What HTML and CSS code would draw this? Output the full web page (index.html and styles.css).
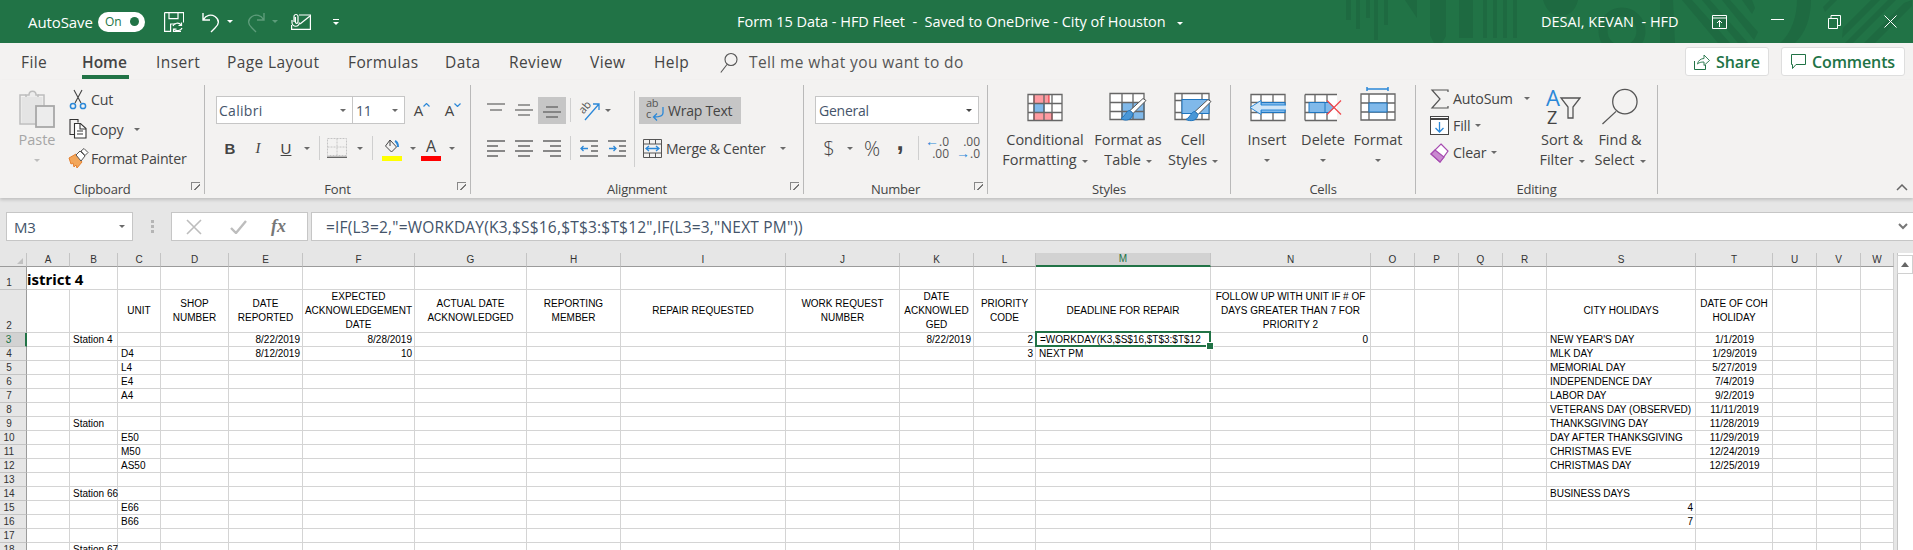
FILE: index.html
```html
<!DOCTYPE html>
<html lang="en">
<head>
<meta charset="utf-8">
<title>Form 15 Data - HFD Fleet</title>
<link rel="stylesheet" href="styles.css">
</head>
<body>
<header class="titlebar">
  <svg class="pattern" width="643" height="43" viewBox="0 0 643 43" fill="#1e6a41">
    <rect x="76" width="5" height="20"/><rect x="86" width="4" height="29"/><rect x="96" width="4" height="18"/><rect x="104" width="4" height="40"/><rect x="114" width="4" height="25"/>
    <path d="M135 0h12v18z"/><path d="M160 0h16v36l-4 7h-8l-4-8z"/><rect x="189" width="14" height="38"/><rect x="213" width="4" height="38"/><rect x="223" width="4" height="38"/><rect x="233" width="4" height="38"/><rect x="243" width="4" height="38"/>
    <path d="M273 0h35c-3 12-10 16-18 16-8 0-14-6-17-16z"/>
    <circle cx="352" cy="31" r="19" fill="none" stroke="#1e6a41" stroke-width="9"/>
    <path d="M390 0h13l2 43h-15zM412 0h10l38 43h-12zM432 0h8l38 43h-10zM452 0h8l28 32-4 8zM472 0h10l3 8-3 6z"/>
    <path d="M510 43c12-10 17-28 17-43h14c0 18-6 34-16 43z"/>
    <path d="M553 7l7-7h7l-12 12zM573 28l28-28h9l-38 38zM575 43l43-43h8l-43 43zM594 43l40-40 8-3v6l-37 37z"/>
  </svg>
  <div class="tb-left">
    <span class="tb-autosave">AutoSave</span>
    <span class="toggle"><span class="toggle-on">On</span><span class="toggle-dot"></span></span>
    <svg class="tb-save" width="20" height="20" viewBox="0 0 20 20" fill="none" stroke="#fff" stroke-width="1.2"><path d="M.6.6h19v10M.6.6v18.8h6V12h5M5 .6v6h9V.6M9 19.4h8"/><path d="M9 14c1-3 6-4 8-1M18 16c-1 3-6 3.500-8 1"/><path d="M17.500 10.500v3h-3M9.500 20v-3h3"/></svg>
    <svg class="tb-undo" width="18" height="22" viewBox="0 0 18 22" fill="none" stroke="#fff" stroke-width="1.4"><path d="M1 2v7h7M1.500 8.500C4 4 9 3 13 5.500c5 3.500 4 8 0 11.500l-4 4"/></svg>
    <span class="caret caret-w tb-c1"></span>
    <svg class="tb-redo" width="18" height="22" viewBox="0 0 18 22" fill="none" stroke="#5d9c7a" stroke-width="1.4"><path d="M17 2v7h-7M16.500 8.500C14 4 9 3 5 5.500c-5 3.500-4 8 0 11.500l4 4"/></svg>
    <span class="caret caret-dim tb-c2"></span>
    <svg class="tb-mail" width="20" height="17" viewBox="0 0 20 17" fill="none" stroke="#fff" stroke-width="1.2"><path d="M8 2h11.400v14.400H.6V12"/><path d="M9 11l10-8"/><path d="M3 9V3.500a2 2 0 0 1 4 0V9a1.300 1.300 0 0 1-2.600 0V4M1 7V9.500a3.500 3.500 0 0 0 7.500 0"/></svg>
    <span class="tb-custom"><span class="tb-line"></span><span class="caret caret-w"></span></span>
  </div>
  <div class="tb-title">Form 15 Data - HFD Fleet&nbsp; -&nbsp; Saved to OneDrive - City of Houston<span class="caret caret-w tb-title-c"></span></div>
  <div class="tb-user">DESAI, KEVAN&nbsp; - HFD</div>
  <svg class="tb-display" width="15" height="14" viewBox="0 0 15 14" fill="none" stroke="#fff"><path d="M.5 .5h14v13H.5zM.5 3h14M7.500 12V5.500M5 8l2.500-2.500L10 8"/></svg>
  <span class="tb-min"></span>
  <svg class="tb-restore" width="13" height="14" viewBox="0 0 13 14" fill="none" stroke="#fff"><path d="M.5 3.500h9v10h-9zM3 3.500V.5h9.500v10h-3"/></svg>
  <svg class="tb-close" width="13" height="13" viewBox="0 0 13 13" fill="none" stroke="#fff"><path d="M.5 .5l12 12M12.500 .5l-12 12"/></svg>
</header>

<nav class="tabs">
  <span class="tab t-file">File</span>
  <span class="tab t-home">Home</span>
  <span class="tab t-insert">Insert</span>
  <span class="tab t-page">Page Layout</span>
  <span class="tab t-formulas">Formulas</span>
  <span class="tab t-data">Data</span>
  <span class="tab t-review">Review</span>
  <span class="tab t-view">View</span>
  <span class="tab t-help">Help</span>
  <svg class="t-search" width="18" height="22" viewBox="0 0 18 22" fill="none" stroke="#555" stroke-width="1.1"><circle cx="11" cy="7.500" r="6"/><path d="M7 12.500L.8 20.500"/></svg>
  <span class="tab t-tell">Tell me what you want to do</span>
  <span class="share"><svg width="16" height="17" viewBox="0 0 16 17" fill="none" stroke="#217346"><path d="M.5 8v8.500h11V12"/><path d="M3.500 11C4 7.500 7 5.500 10 5.500V2l5.500 5.500L10 12.500V9c-3 0-5 .5-6.500 2z" stroke-width=".9"/></svg>Share</span>
  <span class="share comments"><svg width="15" height="15" viewBox="0 0 15 15" fill="none" stroke="#217346"><path d="M.5 .5h14v10H5l-3.500 4v-4h-1z"/></svg>Comments</span>
</nav>

<section class="ribbon">
  <div class="group g-clip">
    <div class="g-body">
      <div class="big paste">
        <svg width="36" height="38" viewBox="0 0 36 38" fill="none" stroke="#bdbdbd" stroke-width="1.500"><path d="M7 5H1v29h16" /><path d="M25 16V5h-6"/><path d="M7 8V5h3c0-5 7-5 7 0h2v3z" fill="#ececec"/><rect x="2.500" y="7" width="21" height="26" fill="#e4e4e4" stroke="none"/><rect x="17" y="16" width="18" height="21" fill="#ececec" stroke="#a8a8a8" stroke-width="1.800"/></svg>
        <span class="big-l dim">Paste</span>
        <span class="caret big-c caret-l"></span>
      </div>
      <div class="clip-col">
        <div class="clip-row"><svg class="ico25" width="18" height="21" viewBox="0 0 18 21" fill="none"><path d="M5 1l7 13M13 1L6 14" stroke="#444" stroke-width="1.100"/><circle cx="4" cy="17" r="2.600" stroke="#2b88d8" stroke-width="1.500"/><circle cx="14" cy="17" r="2.600" stroke="#2b88d8" stroke-width="1.500"/></svg><span>Cut</span></div>
        <div class="clip-row"><svg class="ico25" width="18" height="20" viewBox="0 0 18 20" fill="none" stroke="#333" stroke-width="1.100"><path d="M9 3.500V.5H1v15h4"/><path d="M5.500 4.500h6l5.500 5v9.500H5.500z" fill="#fff"/><path d="M11 5v5h6M8 12h6M8 15h6" /></svg><span>Copy</span><span class="caret copy-c"></span></div>
        <div class="clip-row"><svg class="ico25" width="21" height="21" viewBox="0 0 21 21" fill="none"><path d="M1 10l7-4 6 8-5 6-1-3-2 2-1-4-2 1z" fill="#f2a65a" stroke="#e6812f"/><path d="M8 7l4-4 5 5-4 5z" fill="#fff" stroke="#555"/><path d="M13 3l3-2.500 4 4-3 3z" fill="#fff" stroke="#555"/></svg><span>Format Painter</span></div>
      </div>
    </div>
    <div class="g-label">Clipboard<span class="launcher"></span></div>
  </div>

  <div class="group g-font">
    <div class="g-body rows">
      <div class="row">
        <span class="combo c-font">Calibri<span class="caret"></span></span>
        <span class="combo c-size">11<span class="caret"></span></span>
        <span class="grow-a">A<svg width="7" height="4" viewBox="0 0 7 4" fill="none" stroke="#2b88d8" stroke-width="1.200"><path d="M.5 3.500l3-3 3 3"/></svg></span>
        <span class="grow-a shrink">A<svg width="7" height="4" viewBox="0 0 7 4" fill="none" stroke="#2b88d8" stroke-width="1.200"><path d="M.5 .5l3 3 3-3"/></svg></span>
      </div>
      <div class="row">
        <span class="btn w28 f-b">B</span><span class="btn w28 f-i">I</span><span class="btn w28 f-u">U</span>
        <span class="btn w14"><span class="caret"></span></span>
        <span class="vsep"></span>
        <svg class="f-border" width="20" height="20" viewBox="0 0 20 20" fill="none" stroke="#c4c4c4"><path d="M.5 .5h19v17H.5zM10 .5v17M.5 9h19" stroke-dasharray="2 1"/><path d="M0 19.300h20" stroke="#666" stroke-width="1.400"/></svg>
        <span class="btn w14 f-c2"><span class="caret"></span></span>
        <span class="vsep"></span>
        <span class="swatch-btn"><svg width="16" height="16" viewBox="0 0 16 16" fill="none" stroke="#444"><path d="M6 1l6.500 7-5 5L1.500 7z"/><path d="M6 1v6" /><path d="M11 2c2 1 3 3 3 6" stroke="#2b88d8" stroke-width="2"/></svg><span class="bar yellow"></span></span>
        <span class="btn w14 f-c3"><span class="caret"></span></span>
        <span class="swatch-btn f-color"><span class="color-a">A</span><span class="bar red"></span></span>
        <span class="btn w14 f-c4"><span class="caret"></span></span>
      </div>
    </div>
    <div class="g-label">Font<span class="launcher"></span></div>
  </div>

  <div class="group g-align">
    <div class="g-body a-body">
      <div class="a-col rows">
        <div class="row">
          <span class="btn w28"><svg class="lines" width="18" height="14" viewBox="0 0 18 14"><path d="M0 1h18M3 7h12"/></svg></span>
          <span class="btn w28"><svg class="lines" width="18" height="14" viewBox="0 0 18 14"><path d="M3 2h12M0 7h18M3 12h12"/></svg></span>
          <span class="btn w28 active"><svg class="lines" width="18" height="16" viewBox="0 0 18 16"><path d="M3 5h12M0 10h18M3 15h12"/></svg></span>
          <span class="vsep a-sep"></span>
          <svg class="a-orient" width="24" height="24" viewBox="0 0 24 24" fill="none"><text x="2" y="15" class="mini" transform="rotate(-50 5 13)">ab</text><path d="M6 22L20 6M14 6h6v6" stroke="#2b88d8" stroke-width="1.300"/></svg>
          <span class="caret a-orient-c"></span>
        </div>
        <div class="row">
          <span class="btn w28"><svg class="lines thick" width="18" height="18" viewBox="0 0 18 18"><path d="M0 2h18M0 7h11M0 12h18M0 17h11"/></svg></span>
          <span class="btn w28"><svg class="lines thick" width="18" height="18" viewBox="0 0 18 18"><path d="M0 2h18M3 7h12M0 12h18M3 17h12"/></svg></span>
          <span class="btn w28"><svg class="lines thick" width="18" height="18" viewBox="0 0 18 18"><path d="M0 2h18M7 7h11M0 12h18M7 17h11"/></svg></span>
          <span class="vsep a-sep"></span>
          <span class="btn w28 a-ind"><svg width="18" height="18" viewBox="0 0 18 18" fill="none"><path class="ind-line" d="M0 2h18M11 7h7M11 12h7M0 17h18"/><path d="M8 9.500H1M3.500 7L1 9.500 3.500 12" stroke="#2b88d8" stroke-width="1.300"/></svg></span>
          <span class="btn w28"><svg width="18" height="18" viewBox="0 0 18 18" fill="none"><path class="ind-line" d="M0 2h18M11 7h7M11 12h7M0 17h18"/><path d="M1 9.500h7M5.500 7L8 9.500 5.500 12" stroke="#2b88d8" stroke-width="1.300"/></svg></span>
        </div>
      </div>
      <span class="tall-sep"></span>
      <div class="a-col rows a-col2">
        <div class="row"><span class="wrap active"><svg width="20" height="24" viewBox="0 0 20 24" fill="none"><text x="0" y="9" class="mini">ab</text><text x="0" y="20" class="mini">c</text><path d="M17 9v6c0 3-3 4-9 4M11 15.500L7.500 19l3.500 3.500" stroke="#2b88d8" stroke-width="1.300"/></svg>Wrap Text</span></div>
        <div class="row"><span class="merge"><svg width="19" height="19" viewBox="0 0 19 19" fill="none" stroke="#555"><path d="M.5 .5h18v18H.5zM.5 5h18M.5 14h18M6.500 .5V5M12.500 .5V5M6.500 14v4.500M12.500 14v4.500"/><path d="M3 9.500h13M6 7L3 9.500 6 12M13 7l3 2.500-3 2.500" stroke="#2b88d8" stroke-width="1.300"/></svg>Merge &amp; Center<span class="caret m-c"></span></span></div>
      </div>
    </div>
    <div class="g-label">Alignment<span class="launcher"></span></div>
  </div>

  <div class="group g-num">
    <div class="g-body rows">
      <div class="row"><span class="combo c-gen">General<span class="caret dark"></span></span></div>
      <div class="row">
        <span class="btn w28 n-sym">$</span><span class="btn w14"><span class="caret"></span></span>
        <span class="btn n-pct n-sym">%</span><span class="btn n-cm n-sym">,</span>
        <span class="vsep n-sep"></span>
        <span class="dec"><span><i class="arrow">←</i>.0</span><span>.00</span></span>
        <span class="dec d2"><span>.00</span><span><i class="arrow">→</i>.0</span></span>
      </div>
    </div>
    <div class="g-label">Number<span class="launcher"></span></div>
  </div>

  <div class="group g-styles">
    <div class="g-body bigs">
      <div class="big w86">
        <svg width="36" height="28" viewBox="0 0 36 28"><path class="gfill" d="M1 1h34v26H1z"/><rect x="7" y="1" width="15" height="9" fill="#ff9ba1" stroke="#e2232b"/><rect x="7" y="19" width="18" height="8" fill="#ff9ba1" stroke="#e2232b"/><rect x="7" y="10" width="10" height="9" fill="#80b9ea" stroke="#1f76c0"/><path class="gline" d="M1 1h34v26H1zM1 10h34M1 19h34M7 1v26M17 1v26M25 1v26"/></svg>
        <span class="big-l">Conditional</span><span class="big-l">Formatting<span class="caret lab-c"></span></span>
      </div>
      <div class="big w80">
        <svg width="38" height="30" viewBox="0 0 38 30"><path class="gfill" d="M1 1h34v26H1z"/><rect x="13" y="10" width="22" height="17" fill="#80b9ea" stroke="#1f76c0"/><path class="gline" d="M1 1h34v26H1zM1 10h34M1 19h34M13 1v26M24 1v26"/><path d="M37 8L24 21l-3-3L34 6z" fill="#fff" stroke="#555"/><path d="M21 18c-4 0-4 5-9 8 4 3 11 2 12-5z" fill="#4a97d6" stroke="#1f76c0"/></svg>
        <span class="big-l">Format as</span><span class="big-l">Table<span class="caret lab-c"></span></span>
      </div>
      <div class="big w50">
        <svg width="38" height="30" viewBox="0 0 38 30"><path class="gfill" d="M1 1h34v26H1z"/><path class="gline" d="M1 1h34v26H1zM1 8h34M1 20h34M8 1v26M28 1v26"/><rect x="8" y="7" width="27" height="14" fill="#80b9ea" stroke="#1f76c0"/><path d="M37 9L24 22l-3-3L34 7z" fill="#fff" stroke="#555"/><path d="M21 19c-4 0-4 5-9 8 4 2 11 2 12-5z" fill="#4a97d6" stroke="#1f76c0"/></svg>
        <span class="big-l">Cell</span><span class="big-l">Styles<span class="caret lab-c"></span></span>
      </div>
    </div>
    <div class="g-label">Styles</div>
  </div>

  <div class="group g-cells">
    <div class="g-body bigs">
      <div class="big w56">
        <svg width="38" height="28" viewBox="0 0 38 28"><path class="gfill" d="M3 1h34v26H3z"/><path class="gline" d="M3 1h34v26H3zM3 9h34M3 19h34M13 1v26M25 1v26"/><rect x="13" y="9" width="24" height="10" fill="#80b9ea" stroke="#1f76c0"/><path d="M38 11.500H13V7L2 14l11 7v-4.500h25" fill="#cfe5f7" stroke="#2b88d8"/></svg>
        <span class="big-l">Insert</span><span class="caret big-c"></span>
      </div>
      <div class="big w56">
        <svg width="38" height="28" viewBox="0 0 38 28"><path class="gfill" d="M1 1h32v26H1z"/><path class="gline dash" d="M1 1h32M1 27h32M1 1v26M11 1v26M23 1v26M1 9h20M1 19h20"/><path d="M5 9h20l5 5-5 5H5z" fill="#80b9ea" stroke="#1f76c0"/><path d="M21 9v10" stroke="#1f76c0"/><path d="M23 7l14 14M37 7L23 21" stroke="#f04a4f" stroke-width="1.300"/></svg>
        <span class="big-l">Delete</span><span class="caret big-c"></span>
      </div>
      <div class="big w54 fmt">
        <svg width="36" height="36" viewBox="0 0 36 36"><path d="M7 2v4M28 2v4M7 4h21" stroke="#2b88d8" fill="none" stroke-width="1.500"/><path class="gfill" d="M1 9h34v26H1z"/><path class="gline" d="M1 9h34v26H1zM1 18h34M1 27h34M9 9v26M27 9v26"/><rect x="9" y="18" width="18" height="9" fill="#80b9ea" stroke="#1f76c0"/></svg>
        <span class="big-l">Format</span><span class="caret big-c"></span>
      </div>
    </div>
    <div class="g-label">Cells</div>
  </div>

  <div class="group g-edit">
    <div class="g-body edit-body">
      <div class="edit-col">
        <div class="edit-row"><svg class="ico23" width="19" height="20" viewBox="0 0 19 20" fill="none" stroke="#555" stroke-width="1.200"><path d="M18 3V1H2l8 9-8 9h16v-2"/></svg>AutoSum<span class="caret as-c"></span></div>
        <div class="edit-row"><svg class="ico23" width="19" height="19" viewBox="0 0 19 19" fill="none"><rect x=".5" y=".5" width="18" height="18" fill="#fff" stroke="#444"/><path d="M0 3h19" stroke="#444" stroke-width="2"/><path d="M9.500 6v10M5.500 12l4 4 4-4" stroke="#2b88d8" stroke-width="1.300"/></svg>Fill<span class="caret lab-c"></span></div>
        <div class="edit-row"><svg class="ico23" width="19" height="20" viewBox="0 0 19 20" fill="none" stroke="#a64bb0" stroke-width="1.200"><path d="M11 1l7 7-8 11-9-8z" fill="#fff"/><path d="M5 7l9 7-4 5-9-8z" fill="#c98ad0"/></svg>Clear<span class="caret lab-c"></span></div>
      </div>
      <div class="big w50">
        <span class="sort"><svg width="38" height="36" viewBox="0 0 38 36" fill="none"><text x="3" y="17" class="sort-a">A</text><text x="4" y="35" class="sort-z">Z</text><path d="M18 9h19l-7 9v11h-5V18z" stroke="#555" stroke-width="1.300"/></svg></span>
        <span class="big-l">Sort &amp;</span><span class="big-l">Filter<span class="caret lab-c"></span></span>
      </div>
      <div class="big w66">
        <svg class="find" width="38" height="38" viewBox="0 0 38 38" fill="none" stroke="#555" stroke-width="1.300"><circle cx="24" cy="14" r="12.500"/><path d="M15 24L1 37"/></svg>
        <span class="big-l">Find &amp;</span><span class="big-l">Select<span class="caret lab-c"></span></span>
      </div>
    </div>
    <div class="g-label">Editing</div>
  </div>
  <svg class="collapse" width="12" height="7" viewBox="0 0 12 7" fill="none" stroke="#666" stroke-width="1.500"><path d="M1 6l5-5 5 5"/></svg>
</section>

<section class="fbar">
  <span class="namebox">M3<span class="caret"></span></span>
  <span class="grip"><i></i><i></i><i></i></span>
  <span class="fx-box">
    <svg width="16" height="16" viewBox="0 0 16 16" fill="none" stroke="#bdbdbd" stroke-width="1.600"><path d="M1 1l14 14M15 1L1 15"/></svg>
    <svg width="17" height="14" viewBox="0 0 17 14" fill="none" stroke="#bdbdbd" stroke-width="2.400"><path d="M1 8l5 5L16 1"/></svg>
    <span class="fx">fx</span>
  </span>
  <span class="formula">=IF(L3=2,"=WORKDAY(K3,$S$16,$T$3:$T$12",IF(L3=3,"NEXT PM"))
    <svg class="f-exp" width="10" height="7" viewBox="0 0 10 7" fill="none" stroke="#777" stroke-width="2"><path d="M1 1l4 4 4-4"/></svg>
  </span>
</section>

<main class="sheet">
  <table class="grid">
    <colgroup>
      <col class="c27"><col class="c43"><col class="c48"><col class="c43"><col class="c68"><col class="c74"><col class="c112"><col class="c112"><col class="c94"><col class="c165"><col class="c114"><col class="c74"><col class="c62"><col class="c175"><col class="c160"><col class="c44"><col class="c44"><col class="c44"><col class="c44"><col class="c149"><col class="c77"><col class="c44"><col class="c44"><col class="c33">
    </colgroup>
    <thead>
      <tr>
        <th class="corner"><span class="tri"></span></th>
        <th>A</th><th>B</th><th>C</th><th>D</th><th>E</th><th>F</th><th>G</th><th>H</th><th>I</th><th>J</th><th>K</th><th>L</th><th class="sel-col">M</th><th>N</th><th>O</th><th>P</th><th>Q</th><th>R</th><th>S</th><th>T</th><th>U</th><th>V</th><th>W</th>
      </tr>
    </thead>
    <tbody>
      <tr class="r1"><th>1</th><td colspan="2" class="title">istrict 4</td><td></td><td></td><td></td><td></td><td></td><td></td><td></td><td></td><td></td><td></td><td></td><td></td><td></td><td></td><td></td><td></td><td></td><td></td><td></td><td></td><td></td></tr>
      <tr class="r2"><th>2</th><td></td><td></td><td>UNIT</td><td>SHOP<br>NUMBER</td><td>DATE<br>REPORTED</td><td>EXPECTED<br>ACKNOWLEDGEMENT<br>DATE</td><td>ACTUAL DATE<br>ACKNOWLEDGED</td><td>REPORTING<br>MEMBER</td><td>REPAIR REQUESTED</td><td>WORK REQUEST<br>NUMBER</td><td>DATE<br>ACKNOWLED<br>GED</td><td>PRIORITY<br>CODE</td><td>DEADLINE FOR REPAIR</td><td>FOLLOW UP WITH UNIT IF # OF<br>DAYS GREATER THAN 7 FOR<br>PRIORITY 2</td><td></td><td></td><td></td><td></td><td>CITY HOLIDAYS</td><td>DATE OF COH<br>HOLIDAY</td><td></td><td></td><td></td></tr>
      <tr><th class="sel-row">3</th><td></td><td>Station 4</td><td></td><td></td><td class="n">8/22/2019</td><td class="n">8/28/2019</td><td></td><td></td><td></td><td></td><td class="n">8/22/2019</td><td class="n">2</td><td class="active-cell">=WORKDAY(K3,$S$16,$T$3:$T$12</td><td class="n">0</td><td></td><td></td><td></td><td></td><td>NEW YEAR'S DAY</td><td class="m">1/1/2019</td><td></td><td></td><td></td></tr>
      <tr><th>4</th><td></td><td></td><td>D4</td><td></td><td class="n">8/12/2019</td><td class="n">10</td><td></td><td></td><td></td><td></td><td></td><td class="n">3</td><td>NEXT PM</td><td></td><td></td><td></td><td></td><td></td><td>MLK DAY</td><td class="m">1/29/2019</td><td></td><td></td><td></td></tr>
      <tr><th>5</th><td></td><td></td><td>L4</td><td></td><td></td><td></td><td></td><td></td><td></td><td></td><td></td><td></td><td></td><td></td><td></td><td></td><td></td><td></td><td>MEMORIAL DAY</td><td class="m">5/27/2019</td><td></td><td></td><td></td></tr>
      <tr><th>6</th><td></td><td></td><td>E4</td><td></td><td></td><td></td><td></td><td></td><td></td><td></td><td></td><td></td><td></td><td></td><td></td><td></td><td></td><td></td><td>INDEPENDENCE DAY</td><td class="m">7/4/2019</td><td></td><td></td><td></td></tr>
      <tr><th>7</th><td></td><td></td><td>A4</td><td></td><td></td><td></td><td></td><td></td><td></td><td></td><td></td><td></td><td></td><td></td><td></td><td></td><td></td><td></td><td>LABOR DAY</td><td class="m">9/2/2019</td><td></td><td></td><td></td></tr>
      <tr><th>8</th><td></td><td></td><td></td><td></td><td></td><td></td><td></td><td></td><td></td><td></td><td></td><td></td><td></td><td></td><td></td><td></td><td></td><td></td><td>VETERANS DAY (OBSERVED)</td><td class="m">11/11/2019</td><td></td><td></td><td></td></tr>
      <tr><th>9</th><td></td><td>Station</td><td></td><td></td><td></td><td></td><td></td><td></td><td></td><td></td><td></td><td></td><td></td><td></td><td></td><td></td><td></td><td></td><td>THANKSGIVING DAY</td><td class="m">11/28/2019</td><td></td><td></td><td></td></tr>
      <tr><th>10</th><td></td><td></td><td>E50</td><td></td><td></td><td></td><td></td><td></td><td></td><td></td><td></td><td></td><td></td><td></td><td></td><td></td><td></td><td></td><td>DAY AFTER THANKSGIVING</td><td class="m">11/29/2019</td><td></td><td></td><td></td></tr>
      <tr><th>11</th><td></td><td></td><td>M50</td><td></td><td></td><td></td><td></td><td></td><td></td><td></td><td></td><td></td><td></td><td></td><td></td><td></td><td></td><td></td><td>CHRISTMAS EVE</td><td class="m">12/24/2019</td><td></td><td></td><td></td></tr>
      <tr><th>12</th><td></td><td></td><td>AS50</td><td></td><td></td><td></td><td></td><td></td><td></td><td></td><td></td><td></td><td></td><td></td><td></td><td></td><td></td><td></td><td>CHRISTMAS DAY</td><td class="m">12/25/2019</td><td></td><td></td><td></td></tr>
      <tr><th>13</th><td></td><td></td><td></td><td></td><td></td><td></td><td></td><td></td><td></td><td></td><td></td><td></td><td></td><td></td><td></td><td></td><td></td><td></td><td></td><td></td><td></td><td></td><td></td></tr>
      <tr><th>14</th><td></td><td>Station 66</td><td></td><td></td><td></td><td></td><td></td><td></td><td></td><td></td><td></td><td></td><td></td><td></td><td></td><td></td><td></td><td></td><td>BUSINESS DAYS</td><td></td><td></td><td></td><td></td></tr>
      <tr><th>15</th><td></td><td></td><td>E66</td><td></td><td></td><td></td><td></td><td></td><td></td><td></td><td></td><td></td><td></td><td></td><td></td><td></td><td></td><td></td><td class="n">4</td><td></td><td></td><td></td><td></td></tr>
      <tr><th>16</th><td></td><td></td><td>B66</td><td></td><td></td><td></td><td></td><td></td><td></td><td></td><td></td><td></td><td></td><td></td><td></td><td></td><td></td><td></td><td class="n">7</td><td></td><td></td><td></td><td></td></tr>
      <tr><th>17</th><td></td><td></td><td></td><td></td><td></td><td></td><td></td><td></td><td></td><td></td><td></td><td></td><td></td><td></td><td></td><td></td><td></td><td></td><td></td><td></td><td></td><td></td><td></td></tr>
      <tr><th>18</th><td></td><td>Station 67</td><td></td><td></td><td></td><td></td><td></td><td></td><td></td><td></td><td></td><td></td><td></td><td></td><td></td><td></td><td></td><td></td><td></td><td></td><td></td><td></td><td></td></tr>
    </tbody>
  </table>
  <aside class="vscroll">
    <span class="sb-up"><span class="sb-tri"></span></span>
  </aside>
</main>
</body>
</html>
```

FILE: styles.css
```css
* { box-sizing: border-box; }
html, body { margin: 0; padding: 0; }
body {
  width: 1913px; height: 550px; overflow: hidden;
  display: flex; flex-direction: column;
  background: #e6e6e6; color: #444;
  font-family: "Open Sans", "Liberation Sans", sans-serif;
  font-size: 13px;
}
svg { display: block; flex: none; }

.caret { display: inline-block; width: 0; height: 0; border: 3px solid transparent; border-top: 3px solid #6a6a6a; border-bottom: 0; flex: none; }
.caret.dark { border-top-color: #444; }
.caret-w { border-top-color: #fff; }
.caret-dim { border-top-color: #5d9c7a; }
.caret-l { border-top-color: #bdbdbd; }

/* title bar */
.titlebar { position: relative; flex: none; height: 43px; background: #217346; color: #fff; display: flex; align-items: center; }
.pattern { position: absolute; left: 1270px; top: 0; }
.tb-left { position: relative; display: flex; align-items: center; width: 737px; padding-left: 28px; flex: none; }
.tb-autosave { font-size: 15px; letter-spacing: -.1px; width: 70px; white-space: nowrap; }
.toggle { width: 47px; height: 20px; border-radius: 10px; background: #fff; display: flex; align-items: center; justify-content: space-between; padding: 0 6px 0 7px; color: #217346; font-size: 12px; }
.toggle-dot { width: 9px; height: 9px; border-radius: 50%; background: #217346; }
.tb-save { margin-left: 19px; }
.tb-undo { margin-left: 18px; }
.tb-c1 { margin-left: 7px; }
.tb-redo { margin-left: 14px; }
.tb-c2 { margin-left: 7px; }
.tb-mail { margin-left: 13px; }
.tb-custom { margin-left: 22px; display: flex; flex-direction: column; gap: 2px; align-items: center; }
.tb-line { width: 6px; height: 1px; background: #fff; }
.tb-title { position: relative; width: 804px; font-size: 14.500px; letter-spacing: -.03px; white-space: nowrap; flex: none; }
.tb-title-c { margin-left: 11px; vertical-align: 2px; }
.tb-user { position: relative; width: 171px; font-size: 14.500px; letter-spacing: 0; white-space: nowrap; flex: none; }
.tb-display { position: relative; }
.tb-min { position: relative; width: 13px; height: 1px; background: #fff; margin-left: 44px; margin-top: -5px; }
.tb-restore { position: relative; margin-left: 44px; }
.tb-close { position: relative; margin-left: 43px; }

/* tabs */
.tabs { flex: none; height: 37px; background: #f3f2f1; display: flex; align-items: flex-start; padding-left: 21px; position: relative; }
.tab { font-size: 15.500px; line-height: 38px; color: #444; white-space: nowrap; letter-spacing: .4px; }
.t-file { width: 61px; }
.t-home { width: 74px; font-weight: 600; height: 36px; position: relative; letter-spacing: 0; }
.t-home::after { content: ""; position: absolute; left: 0; top: 32px; width: 47px; height: 4px; background: #217346; }
.t-insert { width: 71px; }
.t-page { width: 121px; }
.t-formulas { width: 97px; }
.t-data { width: 64px; }
.t-review { width: 81px; }
.t-view { width: 64px; }
.t-help { width: 66px; }
.t-search { margin-top: 9px; margin-right: 11px; }
.t-tell { width: 936px; color: #555; }
.share { margin-top: 4px; width: 84px; height: 29px; background: #fff; border: 1px solid #dedede; border-radius: 3px; display: flex; align-items: center; justify-content: center; gap: 6px; color: #217346; font-weight: 600; font-size: 16px; letter-spacing: -.1px; }
.comments { width: 124px; margin-left: 12px; }

/* ribbon */
.ribbon { flex: none; height: 118px; background: #f3f2f1; display: flex; position: relative; box-shadow: 0 2px 3px rgba(0,0,0,.16); }
.group { flex: none; height: 109px; margin-top: 5px; border-right: 1px solid #b9b9b9; display: flex; flex-direction: column; position: relative; }
.g-body { height: 92px; flex: none; }
.g-label { flex: 1; text-align: center; font-size: 13px; line-height: 24px; color: #444; letter-spacing: -.2px; }
.launcher { position: absolute; right: 4px; bottom: 4px; width: 9px; height: 8px; border-left: 1px solid #888; border-top: 1px solid #888; background: linear-gradient(135deg, transparent 55%, #777 55%, #777 70%, transparent 70%); }
.g-clip { width: 205px; }
.g-font { width: 266px; }
.g-align { width: 333px; }
.g-num { width: 184px; }
.g-styles { width: 243px; }
.g-cells { width: 185px; }
.g-edit { width: 242px; }
.collapse { position: absolute; right: 5px; top: 104px; }

.big { display: flex; flex-direction: column; align-items: center; flex: none; }
.big > svg, .big > .sort { height: 37px; margin-bottom: 4px; }
.big-l { line-height: 20px; font-size: 14.500px; letter-spacing: 0; white-space: nowrap; color: #444; }
.big-c { margin-top: 9px; }
.dim { color: #a6a6a6; }
.lab-c { margin-left: 5px; vertical-align: 2px; }
.bigs { display: flex; padding-top: 4px; }
.bigs svg { align-self: center; }
.w86 { width: 86px; } .w80 { width: 80px; } .w50 { width: 50px; } .w56 { width: 56px; } .w54 { width: 54px; } .w66 { width: 66px; }
.g-styles .bigs { padding-left: 14px; }
.g-cells .bigs { padding-left: 8px; }
.big.fmt > svg { height: 36px; margin-top: -4px; margin-bottom: 9px; }

.g-clip .g-body { display: flex; padding-left: 12px; padding-top: 0; }
.paste { width: 50px; }
.big.paste > svg { height: 38px; margin-bottom: 2px; margin-top: 5px; }
.clip-col { margin-left: 4px; display: flex; flex-direction: column; }
.clip-row { height: 29.500px; display: flex; align-items: center; font-size: 14.200px; letter-spacing: -.25px; white-space: nowrap; }
.ico25 { margin-right: 5px; }
.clip-row svg { margin-right: 0; }
.clip-row svg[width="18"] { margin-left: 3px; margin-right: 4px; }
.clip-row svg[width="21"] { margin-left: 2px; margin-right: 2px; }
.copy-c { margin-left: 11px; }

.rows { padding-top: 11px; display: flex; flex-direction: column; gap: 10px; }
.row { display: flex; align-items: center; height: 28px; }
.g-font .rows, .g-num .rows { padding-left: 11px; }
.combo { height: 28px; background: #fff; border: 1px solid #c6c6c6; display: flex; align-items: center; justify-content: space-between; padding: 0 6px 0 3px; font-size: 14px; letter-spacing: -.25px; color: #44546a; }
.c-font { width: 137px; letter-spacing: .3px; padding-left: 2px; }
.c-size { width: 52px; margin-left: 0; border-left: 0; }
.c-gen { width: 164px; }
.grow-a { width: 28px; display: flex; align-items: flex-start; justify-content: center; font-size: 15px; line-height: 1; margin-left: 3px; }
.btn { display: flex; align-items: center; justify-content: center; height: 28px; flex: none; }
.w28 { width: 28px; }
.w14 { width: 14px; }
.f-b { font-weight: 700; font-size: 15px; font-family: "Liberation Sans", sans-serif; }
.f-i { font-style: italic; font-size: 15px; font-family: "Liberation Serif", serif; }
.f-u { text-decoration: underline; font-size: 15px; font-family: "Liberation Sans", sans-serif; }
.vsep { width: 1px; height: 24px; background: #cfcfcf; margin-left: 5px; margin-right: 7px; flex: none; }
.f-border { margin-right: 0; }
.f-c2 { margin-left: 6px; }
.swatch-btn { width: 20px; display: flex; flex-direction: column; align-items: center; height: 25px; margin-left: 2px; justify-content: flex-end; }
.bar { width: 20px; height: 5px; display: block; margin-top: 1px; }
.yellow { background: #ffff00; }
.red { background: #ff0000; }
.f-c3 { margin-left: 4px; }
.f-color { margin-left: 1px; }
.color-a { font-size: 16px; line-height: 18px; }
.f-c4 { margin-left: 4px; }

.a-body { display: flex; padding-left: 11px; }
.a-col { flex: none; }
.a-col:first-child { width: 152px; }
.active { background: #c6c6c6; height: 27px; }
.lines { fill: none; stroke: #444; stroke-width: 1.200; }
.lines.thick { stroke: #666; stroke-width: 1.600; }
.ind-line { stroke: #666; stroke-width: 1.500; }
.a-sep { margin-left: 4px; margin-right: 4px; }
.a-orient { margin-left: 4px; }
.a-orient-c { margin-left: 2px; }
.a-ind { margin-left: 0; }
.tall-sep { width: 1px; height: 76px; margin-top: 6px; background: #cfcfcf; flex: none; }
.a-col2 { padding-left: 4px; }
.wrap { width: 102px; display: flex; align-items: center; gap: 2px; padding-left: 7px; font-size: 14px; letter-spacing: -.25px; color: #444; white-space: nowrap; }
.merge { display: flex; align-items: center; gap: 4px; padding-left: 4px; font-size: 14px; letter-spacing: -.25px; white-space: nowrap; }
.m-c { margin-left: 11px; }
.mini { font: 11px "Open Sans", sans-serif; fill: #555; stroke: none; }

.n-sym { font-size: 20px; font-family: "Open Sans", sans-serif; font-weight: 300; }
.n-pct { width: 30px; }
.n-cm { width: 26px; font-family: "Liberation Sans", sans-serif; font-weight: 700; font-size: 26px; margin-top: -14px; }
.n-sep { margin-left: 5px; margin-right: 6px; }
.dec { width: 24px; display: flex; flex-direction: column; align-items: flex-end; font-size: 12px; line-height: 12px; color: #555; }
.d2 { margin-left: 7px; }
.arrow { color: #2b88d8; font-style: normal; font-size: 14px; line-height: 10px; }

.edit-body { display: flex; padding-left: 14px; }
.edit-col { width: 107px; padding-top: 0; display: flex; flex-direction: column; flex: none; }
.edit-row { height: 27px; display: flex; align-items: center; font-size: 14.200px; letter-spacing: -.15px; white-space: nowrap; }
.ico23 { margin-right: 4px; }
.as-c { margin-left: 11px; }
.g-edit .big { padding-top: 4px; }
.sort { display: block; }
.sort-a { font: 22px "Open Sans", sans-serif; fill: #2b88d8; }
.sort-z { font: 18px "Open Sans", sans-serif; fill: #444; }
.big > .find { margin-top: -1px; margin-bottom: 5px; }

.gfill { fill: #fff; }
.gline { fill: none; stroke: #666; stroke-width: 1.300; }

/* formula bar */
.fbar { flex: none; height: 55px; display: flex; align-items: flex-start; padding: 14px 0 0 6px; }
.namebox { width: 127px; height: 29px; background: #fff; border: 1px solid #c6c6c6; display: flex; align-items: center; justify-content: space-between; padding: 0 7px 0 7px; font-size: 15px; letter-spacing: -.2px; color: #44546a; }
.grip { width: 38px; height: 29px; display: flex; flex-direction: column; align-items: center; justify-content: center; gap: 2px; }
.grip i { width: 3px; height: 3px; background: #b5b5b5; }
.fx-box { width: 137px; height: 29px; background: #fff; border: 1px solid #c6c6c6; display: flex; align-items: center; padding-left: 14px; gap: 28px; }
.fx { font: italic 700 18px "Liberation Serif", serif; color: #777; margin-left: -4px; }
.formula { flex: 1; height: 29px; margin-left: 3px; background: #fff; border: 1px solid #c6c6c6; border-right: 0; display: flex; align-items: center; justify-content: space-between; padding: 0 5px 0 14px; font-size: 15.500px; letter-spacing: .2px; color: #44546a; white-space: nowrap; }

/* sheet */
.sheet { flex: none; display: flex; height: 297px; overflow: hidden; padding-right: 0; }
.grid { table-layout: fixed; border-collapse: separate; border-spacing: 0; width: 1894px; height: 0; font: 10px/14px "Liberation Sans", sans-serif; color: #000; background: #fff; flex: none; }
.c27 { width: 27px; } .c33 { width: 33px; } .c43 { width: 43px; } .c44 { width: 44px; } .c48 { width: 48px; } .c62 { width: 62px; } .c68 { width: 68px; } .c74 { width: 74px; } .c77 { width: 77px; } .c94 { width: 94px; } .c112 { width: 112px; } .c114 { width: 114px; } .c149 { width: 149px; } .c160 { width: 160px; } .c165 { width: 165px; } .c175 { width: 175px; }
.grid thead th { height: 13px; background: #e6e6e6; font-weight: 400; text-align: center; padding: 0; line-height: 12px; border-bottom: 1px solid #9b9b9b; border-right: 1px solid #c4c4c4; color: #333; }
.grid thead tr { height: 13px; }
.corner { position: relative; }
.tri { position: absolute; right: 3px; bottom: 2px; width: 0; height: 0; border-left: 6px solid transparent; border-bottom: 6px solid #c0c0c0; }
.grid tbody th { background: #e6e6e6; font-weight: 400; padding: 0 8px 0 0; text-align: center; vertical-align: bottom; border-bottom: 1px solid #c4c4c4; border-right: 1px solid #9b9b9b; color: #333; line-height: 13px; }
.grid td { height: 14px; padding: 0 2px 0 3px; border-right: 1px solid #d4d4d4; border-bottom: 1px solid #d4d4d4; white-space: nowrap; vertical-align: bottom; overflow: visible; line-height: 13px; }
.grid td.n { text-align: right; }
.grid td.m { text-align: center; }
.r1 td, .r1 th { height: 23px; }
.r2 td, .r2 th { height: 42px; }
.r2 td { text-align: center; vertical-align: middle; line-height: 14px; padding: 0; }
.grid td.title { font: 700 15px/20px "Noto Sans", "Liberation Sans", sans-serif; padding: 0; letter-spacing: 0; text-align: left; color: #000; }
.grid .sel-col { background: #d2d2d2; border-bottom: 2px solid #217346; color: #217346; }
.grid tbody .sel-row { background: #d2d2d2; border-right: 2px solid #217346; color: #217346; }
.grid td.active-cell { position: relative; padding-left: 4px; }
.active-cell::after { content: ""; position: absolute; left: -1px; top: -2px; right: -1px; bottom: -1px; border: 2px solid #217346; }
.active-cell::before { content: ""; position: absolute; right: -4px; bottom: -4px; width: 6px; height: 6px; background: #217346; border: 1px solid #fff; z-index: 1; }
.vscroll { width: 19px; flex: none; background: #fff; border-left: 3px solid #e6e6e6; padding-top: 2px; position: relative; box-shadow: inset 1px 0 0 #c4c4c4; }
.sb-up { display: flex; align-items: center; justify-content: center; height: 19px; border: 1px solid #d0d0d0; background: #fff; }
.sb-tri { width: 0; height: 0; border: 4px solid transparent; border-bottom: 5px solid #666; border-top: 0; }
```
